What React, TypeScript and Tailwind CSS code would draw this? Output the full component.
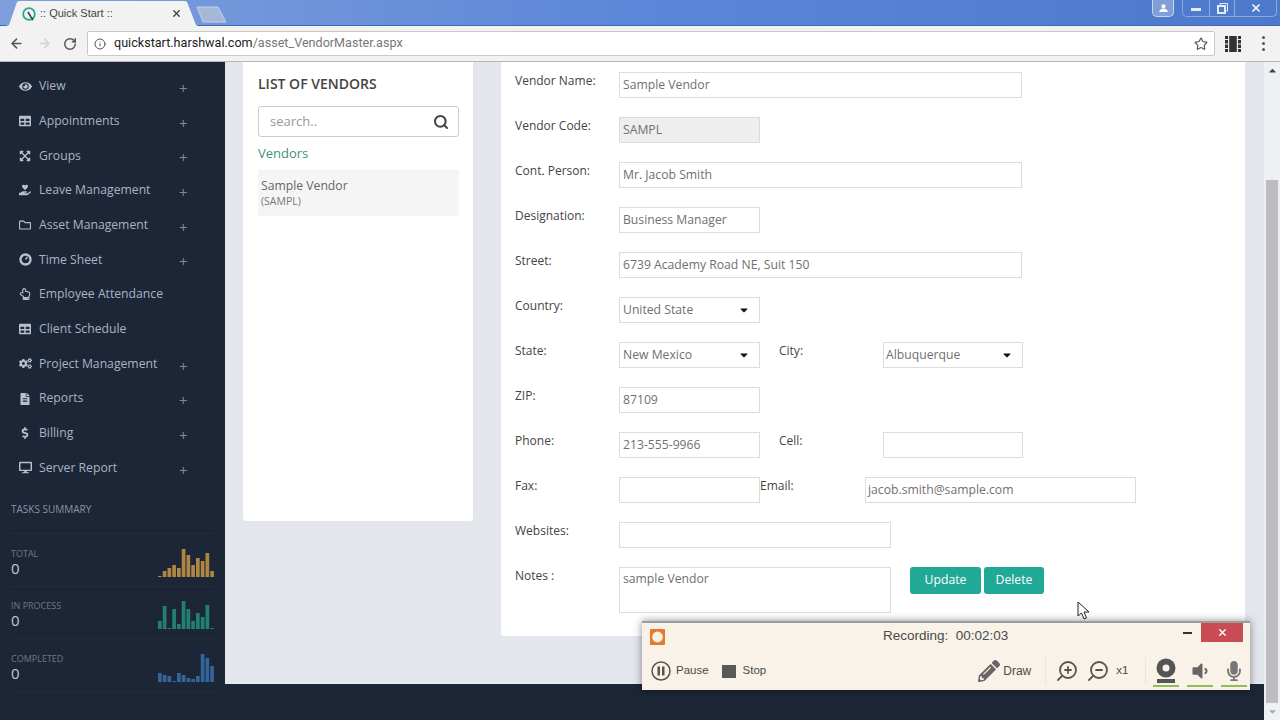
import React from "react";
import { ArrowLeft, ArrowRight, RotateCw, Info, Star, Search, ZoomIn, ZoomOut, X } from "lucide-react";
import { FaEye, FaTable, FaExpandArrowsAlt, FaHandHoldingHeart, FaRegFolder, FaRegHandPointUp, FaCogs, FaFileAlt, FaDollarSign, FaDesktop, FaPencilAlt, FaVolumeDown, FaMicrophone, FaCaretDown, FaCaretUp } from "react-icons/fa";

function TimeIcon() {
  return (
    <svg width="13" height="13" viewBox="0 0 13 13">
      <circle cx="6.5" cy="6.5" r="5" fill="none" stroke="currentColor" strokeWidth="2.4" />
      <path d="M6.5 6.5 L8.5 4" stroke="currentColor" strokeWidth="1.4" />
    </svg>
  );
}

const menu: [React.ReactNode, string, boolean][] = [
  [<FaEye size={13} />, "View", true],
  [<FaTable size={12} />, "Appointments", true],
  [<FaExpandArrowsAlt size={12} />, "Groups", true],
  [<FaHandHoldingHeart size={12} />, "Leave Management", true],
  [<FaRegFolder size={12} />, "Asset Management", true],
  [<TimeIcon />, "Time Sheet", true],
  [<FaRegHandPointUp size={12} />, "Employee Attendance", false],
  [<FaTable size={12} />, "Client Schedule", false],
  [<FaCogs size={13} />, "Project Management", true],
  [<FaFileAlt size={12} />, "Reports", true],
  [<FaDollarSign size={12} />, "Billing", true],
  [<FaDesktop size={13} />, "Server Report", true],
];

const tasks: [string, string, number[]][] = [
  ["TOTAL", "#ad8644", [1, 6, 9, 12, 9, 28, 22, 12, 19, 16, 24, 6]],
  ["IN PROCESS", "#22806f", [8, 23, 1, 20, 5, 28, 20, 8, 16, 12, 24, 1]],
  ["COMPLETED", "#33659a", [9, 7, 6, 1, 9, 7, 4, 3, 6, 28, 24, 16]],
];

function Spark({ color, data }: { color: string; data: number[] }) {
  return (
    <svg width="56" height="29" viewBox="0 0 56 29" className="shrink-0">
      {data.map((h, i) => (
        <rect key={i} x={i * 4.75} y={29 - h} width="3.7" height={h} fill={color} />
      ))}
    </svg>
  );
}

function Field({ w, value, bg, caret, tight }: { w: string; value?: string; bg?: string; caret?: boolean; tight?: boolean }) {
  return (
    <div className={`${w} ${bg ?? "bg-white"} ${tight ? "pl-[2px]" : "pl-[3px]"} h-[26px] shrink-0 border border-[#dcdcdc] pr-[9px] flex items-center justify-between text-[12.2px] text-[#707070]`}>
      <span>{value}</span>
      {caret && <FaCaretDown size={12} className="text-[#111]" />}
    </div>
  );
}

function Label({ w, text, className }: { w: string; text: string; className?: string }) {
  return <div className={`${w} ${className ?? ""} shrink-0 text-[12px] font-medium leading-[18px] text-[#444]`}>{text}</div>;
}

function Row({ children }: { children: React.ReactNode }) {
  return <div className="h-[45px] flex items-start">{children}</div>;
}

export default function App() {
  return (
    <div className="relative w-[1280px] h-[720px] overflow-hidden flex flex-col bg-white font-['Open_Sans','Noto_Sans',sans-serif]">
      {/* tab strip */}
      <div className="h-[26px] shrink-0 flex items-end justify-between bg-gradient-to-r from-[#7e9fdc] via-[#5b87d8] to-[#4d79cc] border-b border-[#3f68b4]">
        <div className="flex items-end pl-[6px]">
          <div className="relative w-[192px] h-[25px] flex items-center pl-[15px] pr-[12px] -mb-px">
            <svg className="absolute inset-0" width="192" height="25" viewBox="0 0 192 25">
              <path d="M0 25 L3 24 L11 1 Q12 0 14 0 L178 0 Q180 0 181 1 L190 24 L192 25 Z" fill="#f2f2f2" />
            </svg>
            <svg className="relative" width="16" height="16" viewBox="0 0 16 16">
              <circle cx="8" cy="8" r="5.8" fill="none" stroke="#22a98f" strokeWidth="1.8" />
              <path d="M7 6 L10 11 L12 14" fill="none" stroke="#37474f" strokeWidth="1.6" />
            </svg>
            <span className="relative ml-[3px] text-[11px] text-[#444] font-['Liberation_Sans',sans-serif]">:: Quick Start ::</span>
            <X size={11} strokeWidth={3} className="relative ml-auto mr-[4px] text-[#444]" />
          </div>
          <svg width="32" height="17" viewBox="0 0 32 17" className="ml-[-2px] mb-[2px]">
            <path d="M1 1 L22 1 L30 16 L7 16 Z" fill="#a5b8d8" stroke="#c3cfe4" strokeWidth="1" />
          </svg>
        </div>
        <div className="flex items-start self-start pr-[3px] text-[#e8eef8]">
          <div className="w-[22px] h-[17px] mr-[8px] rounded-b-[5px] border border-t-0 border-[#c9d6ee] bg-[#7f9fd6] flex items-center justify-center">
            <svg width="9" height="8" viewBox="0 0 10 9"><circle cx="5" cy="2.5" r="2.3" fill="#fff" /><path d="M0 9 Q1 5 5 5 Q9 5 10 9 Z" fill="#fff" /></svg>
          </div>
          <div className="flex h-[17px] rounded-b-[5px] border border-t-0 border-[#8fa9da]">
            <div className="w-[27px] flex items-center justify-center border-r border-[#8fa9da]"><div className="w-[10px] h-[3px] mt-[3px] bg-[#e6ecf7]" /></div>
            <div className="w-[25px] flex items-center justify-center border-r border-[#8fa9da]">
              <svg width="11" height="11" viewBox="0 0 11 11" fill="none" stroke="#e6ecf7">
                <path d="M3 2 V0.5 H10.5 V8 H9" strokeWidth="1" />
                <rect x="1" y="3" width="7" height="7" strokeWidth="2" />
              </svg>
            </div>
            <div className="w-[41px] flex items-center justify-center"><X size={12} strokeWidth={3.5} className="text-[#f4f6fb]" /></div>
          </div>
        </div>
      </div>

      {/* toolbar */}
      <div className="h-[36px] shrink-0 flex items-center bg-[#f2f2f2] border-b border-[#b8b8b8]">
        <ArrowLeft size={15} strokeWidth={2.5} className="ml-[9px] text-[#555]" />
        <ArrowRight size={15} strokeWidth={2.5} className="ml-[13px] text-[#d4d4d4]" />
        <RotateCw size={14} strokeWidth={2.5} className="ml-[11px] text-[#555]" />
        <div className="ml-[10px] w-[1128px] h-[25px] bg-white border border-[#c8c8c8] rounded-[2px] flex items-center pl-[6px] pr-[6px] text-[12.6px] font-['Roboto',sans-serif]">
          <Info size={12} className="text-[#555]" />
          <span className="ml-[8px] text-[#222]">quickstart.harshwal.com</span>
          <span className="text-[#777]">/asset_VendorMaster.aspx</span>
          <Star size={14} strokeWidth={2} className="ml-auto text-[#555]" />
        </div>
        <svg width="16" height="16" viewBox="0 0 16 16" className="ml-[10px]">
          <rect width="16" height="16" fill="#333" />
          <rect x="3" y="0" width="1.2" height="16" fill="#eee" />
          <rect x="11.8" y="0" width="1.2" height="16" fill="#eee" />
          <path d="M0 3.5 H3 M0 8 H3 M0 12.5 H3 M13 3.5 H16 M13 8 H16 M13 12.5 H16" stroke="#eee" strokeWidth="1" />
        </svg>
        <div className="ml-[21px] flex flex-col gap-[3px]">
          <div className="w-[3px] h-[3px] rounded-full bg-[#555]" />
          <div className="w-[3px] h-[3px] rounded-full bg-[#555]" />
          <div className="w-[3px] h-[3px] rounded-full bg-[#555]" />
        </div>
      </div>

      {/* page */}
      <div className="flex-1 flex min-h-0">
        <aside className="w-[225px] shrink-0 bg-[#1c2637] pt-[7px] text-[#aab4c2]">
          {menu.map(([icon, label, plus]) => (
            <div key={label} className="h-[34.7px] flex items-center relative pl-[19px] text-[12.2px]">
              <span className="w-[20px] flex text-[#b8c0cb]">{icon}</span>
              <span>{label}</span>
              {plus && <span className="absolute left-[179px] top-[10px] text-[15px] leading-[18px] text-[#7f8a9a]">+</span>}
            </div>
          ))}
          <div className="mt-[17px] ml-[11px] text-[10px] leading-[14px] text-[#8a94a4]">TASKS SUMMARY</div>
          <div className="mt-[17px] mx-[11px] border-t border-[#222d40]">
            {tasks.map(([name, color, data]) => (
              <div key={name} className="h-[52.5px] flex items-end justify-between pb-[9px] border-b border-[#222d40]">
                <div>
                  <div className="text-[9px] leading-[11px] text-[#6d7888]">{name}</div>
                  <div className="text-[15px] leading-[18px] text-[#c2c9d3]">0</div>
                </div>
                <Spark color={color} data={data} />
              </div>
            ))}
          </div>
        </aside>

        <div className="flex-1 flex flex-col min-w-0">
          <main className="h-[621px] shrink-0 bg-[#e3e6ed] flex items-start pl-[18px] gap-[28px]">
            <section className="w-[230px] h-[459px] bg-white rounded-b-[3px] pl-[15px] pr-[14px] pt-[12px]">
              <h2 className="text-[14px] leading-[20px] font-semibold text-[#444]">LIST OF VENDORS</h2>
              <div className="mt-[12px] h-[31px] border border-[#ccc] rounded-[3px] flex items-center justify-between pl-[11px] pr-[9px]">
                <span className="text-[13px] text-[#999]">search..</span>
                <Search size={16} strokeWidth={3} className="text-[#444]" />
              </div>
              <div className="mt-[6px] text-[13px] leading-[20px] text-[#3c917f]">Vendors</div>
              <div className="mt-[7px] h-[46px] bg-[#f5f5f5] pl-[3px] pt-[7px] text-[#666]">
                <div className="text-[12.2px] leading-[18px]">Sample Vendor</div>
                <div className="text-[10.5px] leading-[13px] text-[#777]">(SAMPL)</div>
              </div>
            </section>

            <section className="w-[744px] h-[574px] bg-white rounded-b-[3px] pl-[14px] pt-[10px]">
              <Row><Label w="w-[104px]" text="Vendor Name:" /><Field w="w-[403px]" value="Sample Vendor" /></Row>
              <Row><Label w="w-[104px]" text="Vendor Code:" /><Field w="w-[141px]" value="SAMPL" bg="bg-[#eeeeee]" /></Row>
              <Row><Label w="w-[104px]" text="Cont. Person:" /><Field w="w-[403px]" value="Mr. Jacob Smith" /></Row>
              <Row><Label w="w-[104px]" text="Designation:" /><Field w="w-[141px]" value="Business Manager" /></Row>
              <Row><Label w="w-[104px]" text="Street:" /><Field w="w-[403px]" value="6739 Academy Road NE, Suit 150" /></Row>
              <Row><Label w="w-[104px]" text="Country:" /><Field w="w-[141px]" value="United State" caret /></Row>
              <Row>
                <Label w="w-[104px]" text="State:" /><Field w="w-[141px]" value="New Mexico" caret />
                <Label w="w-[104px]" className="ml-[19px]" text="City:" /><Field w="w-[140px]" value="Albuquerque" caret tight />
              </Row>
              <Row><Label w="w-[104px]" text="ZIP:" /><Field w="w-[141px]" value="87109" /></Row>
              <Row>
                <Label w="w-[104px]" text="Phone:" /><Field w="w-[141px]" value="213-555-9966" />
                <Label w="w-[104px]" className="ml-[19px]" text="Cell:" /><Field w="w-[140px]" />
              </Row>
              <Row>
                <Label w="w-[104px]" text="Fax:" /><Field w="w-[141px]" />
                <Label w="w-[105px]" text="Email:" /><Field w="w-[271px]" value="jacob.smith@sample.com" tight />
              </Row>
              <Row><Label w="w-[104px]" text="Websites:" /><Field w="w-[272px]" /></Row>
              <div className="flex items-start">
                <Label w="w-[104px]" text="Notes :" />
                <div className="w-[272px] h-[46px] border border-[#dcdcdc] px-[3px] pt-[2px] text-[12.2px] leading-[18px] text-[#707070]">sample Vendor</div>
                <button className="ml-[19px] w-[71px] h-[27px] rounded-[3px] bg-[#1fa996] text-white text-[12.2px]">Update</button>
                <button className="ml-[3px] w-[60px] h-[27px] rounded-[3px] bg-[#1fa996] text-white text-[12.2px]">Delete</button>
              </div>
            </section>
          </main>
          <div className="flex-1 bg-[#1c2637] border-t border-[#e9ebf0]" />
        </div>

        <div className="w-[16px] shrink-0 bg-[#eef0f4] flex flex-col items-center">
          <FaCaretUp size={11} className="mt-[3px] text-[#444]" />
          <div className="mt-[104px] w-[12px] h-[523px] bg-[#bdbdc0]" />
          <FaCaretDown size={11} className="mt-[3px] text-[#aaa]" />
        </div>
      </div>

      {/* recorder overlay */}
      <div className="absolute left-[642px] top-[621px] w-[608px] h-[69px] bg-[#f9f2e9] border-t-2 border-[#9c9c98] shadow-[0_0_8px_rgba(0,0,0,0.45)] text-[#4a4a4a] font-['Liberation_Sans',sans-serif]">
        <div className="h-[27px] flex items-center relative">
          <svg width="15" height="16" viewBox="0 0 15 16" className="ml-[8px]">
            <rect width="15" height="16" rx="1" fill="#e8792c" />
            <circle cx="7.5" cy="8" r="5.4" fill="#fbeee2" />
          </svg>
          <span className="absolute left-[241px] top-[4px] text-[13.5px] leading-[18px] whitespace-pre">Recording:  00:02:03</span>
          <div className="ml-auto mr-[7px] flex items-start self-start">
            <div className="w-[9px] h-[2px] mt-[9px] bg-[#333]" />
            <div className="ml-[9px] w-[42px] h-[19px] bg-[#c94c54] flex items-center justify-center"><X size={11} strokeWidth={3} className="text-white" /></div>
          </div>
        </div>
        <div className="h-[40px] pt-[2px] flex items-center relative text-[11.5px]">
          <svg width="20" height="20" viewBox="0 0 20 20" className="ml-[9px]">
            <circle cx="10" cy="10" r="9" fill="none" stroke="#555" strokeWidth="1.5" />
            <rect x="6.5" y="5.5" width="2.5" height="9" fill="#555" />
            <rect x="11" y="5.5" width="2.5" height="9" fill="#555" />
          </svg>
          <span className="ml-[5px]">Pause</span>
          <div className="ml-[13px] w-[14px] h-[13px] bg-[#595959]" />
          <span className="ml-[7px]">Stop</span>
          <FaPencilAlt size={22} className="ml-[212px] text-[#666]" />
          <span className="ml-[3px] text-[12px]">Draw</span>
          <div className="ml-[14px] w-px h-[28px] bg-[#ebe5dc]" />
          <ZoomIn size={24} strokeWidth={1.8} className="ml-[9px] -scale-x-100 text-[#555]" />
          <ZoomOut size={24} strokeWidth={1.8} className="ml-[7px] -scale-x-100 text-[#555]" />
          <span className="ml-[6px] text-[11.5px]">x1</span>
          <div className="ml-[17px] w-px h-[28px] bg-[#ebe5dc]" />
          <div className="ml-[7px] mt-[3px] w-[26px] flex flex-col items-center relative">
            <svg width="20" height="26" viewBox="0 0 20 26">
              <circle cx="10" cy="10" r="9.5" fill="#555" />
              <circle cx="10" cy="10" r="3.5" fill="#f9f2e9" />
              <rect x="1" y="21" width="18" height="4" fill="#555" />
            </svg>
            <div className="w-[26px] h-[2px] mt-[1px] bg-[#92bc55]" />
          </div>
          <div className="ml-[8px] mt-[3px] w-[26px] flex flex-col items-center">
            <div className="h-[26px] flex items-center"><FaVolumeDown size={20} className="text-[#666]" /></div>
            <div className="w-[26px] h-[2px] mt-[1px] bg-[#92bc55]" />
          </div>
          <div className="ml-[8px] mt-[3px] w-[26px] flex flex-col items-center">
            <div className="h-[26px] flex items-center"><FaMicrophone size={20} className="text-[#777]" /></div>
            <div className="w-[26px] h-[2px] mt-[1px] bg-[#92bc55]" />
          </div>
        </div>
      </div>

      {/* pointer */}
      <svg className="absolute left-[1077px] top-[601px]" width="13" height="19" viewBox="0 0 13 19">
        <path d="M1 1 L1 15 L4.5 12 L7 18 L9.5 17 L7 11 L12 11 Z" fill="#fff" stroke="#222" strokeWidth="1" />
      </svg>
    </div>
  );
}
